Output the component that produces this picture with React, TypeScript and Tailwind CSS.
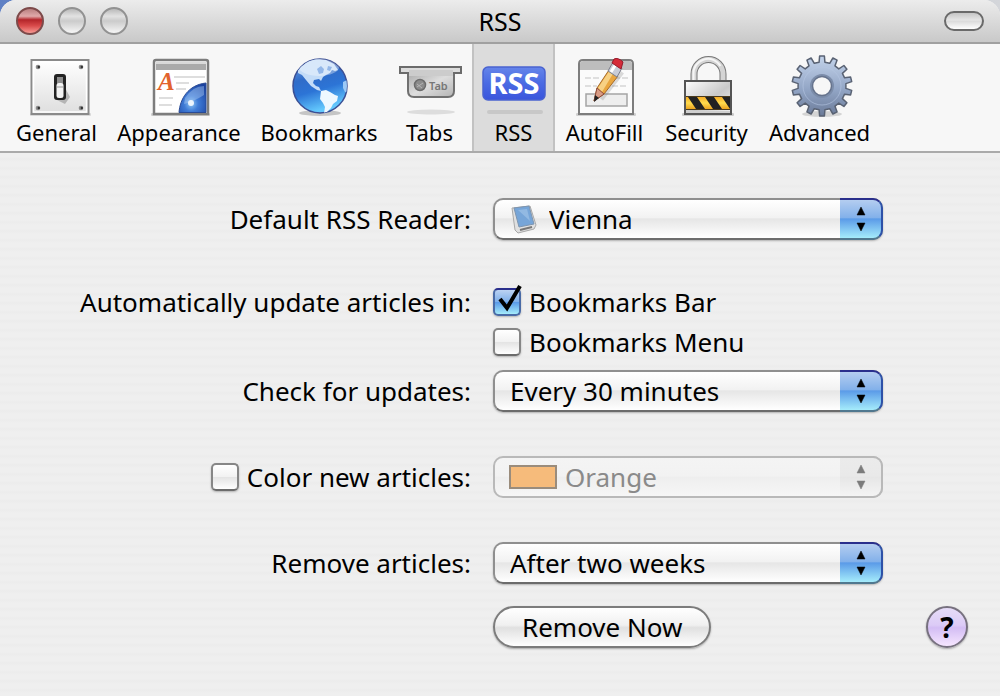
import { useState } from 'react';
import type { ReactNode } from 'react';
import clsx from 'clsx';

function GeneralIcon() {
  return (
    <svg viewBox="0 0 72 64" className="h-16 w-[72px]" aria-hidden="true">
      <defs>
        <linearGradient id="plate" x1="0" y1="0" x2="0" y2="1">
          <stop offset="0" stopColor="#ffffff" />
          <stop offset="1" stopColor="#dedede" />
        </linearGradient>
      </defs>
      <rect x="9" y="59" width="61" height="3" rx="1" fill="#000" opacity="0.12" />
      <rect x="10.500" y="6" width="57" height="54" fill="url(#plate)" stroke="#8a8a8a" strokeWidth="2" />
      <rect x="12.500" y="8" width="53" height="50" fill="none" stroke="#fff" strokeWidth="1.500" />
      {[[17, 13], [60, 13], [17, 54], [60, 54]].map(([x, y]) => (
        <g key={`${x}-${y}`}>
          <circle cx={x} cy={y} r="2.300" fill="#8c8c8c" />
          <circle cx={x + 0.8} cy={y} r="1.200" fill="#333" />
        </g>
      ))}
      <path d="M43 32L49 43L44 50L36 46Z" fill="#777" opacity="0.45" />
      <rect x="33" y="20" width="12" height="26" rx="3" fill="#222" />
      <rect x="36" y="23" width="6" height="7" fill="#8d8d8d" />
      <rect x="35.500" y="29" width="7" height="15" rx="2.500" fill="#f2f2f2" />
      <path d="M35.500 33h7" stroke="#999" strokeWidth="1" />
    </svg>
  );
}

function AppearanceIcon() {
  return (
    <svg viewBox="0 0 72 64" className="h-16 w-[72px]" aria-hidden="true">
      <defs>
        <radialGradient id="appearanceOrb" cx="0.450" cy="0.700" r="0.750">
          <stop offset="0" stopColor="#8cc4f4" />
          <stop offset="0.350" stopColor="#3f7bd6" />
          <stop offset="1" stopColor="#1a429f" />
        </radialGradient>
      </defs>
      <rect x="8" y="59" width="59" height="3" rx="1" fill="#000" opacity="0.16" />
      <path d="M11 60V8q0-2 2-2h50q2 0 2 2v52z" fill="#fff" stroke="#7d7d7d" strokeWidth="2.500" />
      <rect x="13" y="8" width="50" height="8" fill="#aaaaaa" />
      <rect x="13" y="8" width="50" height="2" fill="#d9d9d9" />
      <path d="M31 23h31M33 29h13M33 35h10M16 44h14M16 51h13" stroke="#d4d4d4" strokeWidth="1.500" />
      <path d="M63 29C45 31 37 45 36 58.500H63Z" fill="url(#appearanceOrb)" stroke="#2a4a94" strokeWidth="1" />
      <path d="M42 44q8-12 19-12v9q-11 7-20 9z" fill="#b7d5f7" opacity="0.4" />
      <circle cx="48" cy="49" r="3" fill="#fff" opacity="0.85" />
      <text x="15" y="36" fontSize="25" fontStyle="italic" fontWeight="700" fill="#e2632d" fontFamily="Liberation Serif, serif">A</text>
    </svg>
  );
}

function BookmarksIcon() {
  return (
    <svg viewBox="0 0 72 64" className="h-16 w-[72px]" aria-hidden="true">
      <defs>
        <linearGradient id="ocean" x1="0" y1="0" x2="0.300" y2="1">
          <stop offset="0" stopColor="#7fa9e6" />
          <stop offset="0.400" stopColor="#2f6cc9" />
          <stop offset="0.650" stopColor="#2c74d6" />
          <stop offset="1" stopColor="#63c8fd" />
        </linearGradient>
        <clipPath id="globeClip"><circle cx="37" cy="32" r="27" /></clipPath>
      </defs>
      <ellipse cx="37" cy="59" rx="21" ry="3" fill="#000" opacity="0.2" />
      <circle cx="37" cy="32" r="27" fill="url(#ocean)" stroke="#3b4f94" strokeWidth="1.500" />
      <g clipPath="url(#globeClip)">
        <path d="M15 16C20 9 26 6 33 5l10 1 8 4 4 6-3 1-3-1-2 3-4 2-3 2-2 4-2-2-5 1-1 3 3 3 3 1 2 4-4-1-6-4-5-6-4-5-4-2z" fill="#c3dcf8" />
        <path d="M38 37l5-1 4 2 5 3 3 1-1 5-4 3-2 4-4 4-3 1 1-6-2-4-3-4z" fill="#eef8ff" />
        <path d="M60 28l6-3v15l-4-2-2-4z" fill="#9cc9f6" />
        <path d="M34 15l4-3 3 3-1 4-4 1zM45 12l4 1-2 4-3-1z" fill="#5a91dc" />
        <ellipse cx="36" cy="13" rx="20" ry="9" fill="#fff" opacity="0.35" />
      </g>
    </svg>
  );
}

function TabsIcon() {
  return (
    <svg viewBox="0 0 72 64" className="h-16 w-[72px]" aria-hidden="true">
      <defs>
        <linearGradient id="tabMetal" x1="0" y1="0" x2="1" y2="1">
          <stop offset="0" stopColor="#a9a9a9" />
          <stop offset="0.500" stopColor="#dddddd" />
          <stop offset="1" stopColor="#b4b4b4" />
        </linearGradient>
      </defs>
      <ellipse cx="37" cy="58" rx="24" ry="2.500" fill="#000" opacity="0.1" />
      <path d="M14 18h46v19q0 6-6 6H20q-6 0-6-6z" fill="url(#tabMetal)" stroke="#707070" strokeWidth="2" />
      <rect x="6" y="13" width="61" height="6" fill="#dcdcdc" stroke="#6b6b6b" strokeWidth="2" />
      <rect x="15" y="16" width="44" height="6" fill="#cccccc" />
      <circle cx="26" cy="31" r="5.500" fill="#8b8b8b" stroke="#6c6c6c" strokeWidth="1.500" />
      <path d="M23 33l6-4M23 30l5 4" stroke="#b4b4b4" strokeWidth="1" />
      <text x="35" y="36" fontSize="11" fontWeight="600" fill="#777" fontFamily="Noto Sans, sans-serif">Tab</text>
    </svg>
  );
}

function RssIcon() {
  return (
    <svg viewBox="0 0 72 64" className="h-16 w-[72px]" aria-hidden="true">
      <defs>
        <linearGradient id="rssBlue" x1="0" y1="0" x2="0" y2="1">
          <stop offset="0" stopColor="#6585ea" />
          <stop offset="0.500" stopColor="#4a6ae3" />
          <stop offset="1" stopColor="#3a55dc" />
        </linearGradient>
      </defs>
      <rect x="9" y="56" width="56" height="4" rx="2" fill="#000" opacity="0.09" />
      <rect x="5" y="13" width="62" height="33" rx="5" fill="url(#rssBlue)" stroke="#4a63d0" strokeWidth="1.500" />
      <text x="36" y="40" fontSize="29" fontWeight="700" fill="#fff" textAnchor="middle" fontFamily="Noto Sans, sans-serif">RSS</text>
    </svg>
  );
}

function AutoFillIcon() {
  return (
    <svg viewBox="0 0 72 64" className="h-16 w-[72px]" aria-hidden="true">
      <rect x="7" y="59" width="60" height="3" rx="1" fill="#000" opacity="0.16" />
      <path d="M10 60V10q0-4 4-4h46q4 0 4 4v50z" fill="#fbfbfb" stroke="#7d7d7d" strokeWidth="2" />
      <path d="M11 16v-6q0-3 3-3h46q3 0 3 3v6z" fill="#bdbdbd" />
      <path d="M16 24h15M16 32h12M45 24h14M43 32h15" stroke="#d6d6d6" strokeWidth="1.500" strokeDasharray="6 2" />
      <rect x="17" y="40" width="41" height="12" fill="#eeeeee" stroke="#a5a5a5" strokeWidth="1.500" />
      <path d="M32 45L53 18" stroke="#777" strokeWidth="5" opacity="0.25" />
      <path d="M25 47l3-13 12-18 9 6-14 18z" fill="#e9a63f" stroke="#a56a2a" strokeWidth="1" />
      <path d="M29 34l12-18 4 2-12 20z" fill="#f7d184" />
      <path d="M25 47l3-13 7 6z" fill="#d99b84" stroke="#8e4b3c" strokeWidth="1" />
      <path d="M25 48l1-7 4 3z" fill="#222" />
      <path d="M39 17l5-9 9 6-5 9z" fill="#c9cdd8" stroke="#7d7f8c" strokeWidth="1" />
      <path d="M42 18l5-8" stroke="#fff" strokeWidth="3" />
      <path d="M43 9l2-4q4-2 9 3l-2 7z" fill="#d52b39" stroke="#951a2a" strokeWidth="1" />
    </svg>
  );
}

function SecurityIcon() {
  return (
    <svg viewBox="0 0 72 64" className="h-16 w-[72px]" aria-hidden="true">
      <defs>
        <linearGradient id="lockBody" x1="0" y1="0" x2="1" y2="1">
          <stop offset="0" stopColor="#ffffff" />
          <stop offset="0.550" stopColor="#c9c9c9" />
          <stop offset="1" stopColor="#f3f3f3" />
        </linearGradient>
        <linearGradient id="lockYellow" x1="0" y1="0" x2="0" y2="1">
          <stop offset="0" stopColor="#f4a51f" />
          <stop offset="0.500" stopColor="#ffdc4e" />
          <stop offset="1" stopColor="#e89a17" />
        </linearGradient>
        <clipPath id="stripeClip"><rect x="15" y="43" width="44" height="12" /></clipPath>
      </defs>
      <rect x="11" y="59" width="52" height="3" rx="1" fill="#000" opacity="0.18" />
      <path d="M23 27V20a14.500 14.500 0 0 1 29 0V27" fill="none" stroke="#777" strokeWidth="7" />
      <path d="M23 27V20a14.500 14.500 0 0 1 29 0V27" fill="none" stroke="#d4d4d4" strokeWidth="5" />
      <path d="M22.500 27V20a14.500 14.500 0 0 1 27-8" fill="none" stroke="#f5f5f5" strokeWidth="2" />
      <rect x="14" y="27" width="46" height="33" fill="url(#lockBody)" stroke="#555" strokeWidth="2" />
      <rect x="15" y="42" width="44" height="14" fill="url(#lockYellow)" />
      <g clipPath="url(#stripeClip)" fill="#222">
        <path d="M17 43h9l8 12h-9zM34 43h9l8 12h-9zM51 43h9l8 12h-9z" />
      </g>
      <path d="M15 42.500h44M15 55.500h44" stroke="#4a3a1c" strokeWidth="1" />
      <rect x="15" y="57" width="44" height="2" fill="#cfcfcf" />
    </svg>
  );
}

const GEAR_TEETH = 14;

// four points for each tooth: up the flank, across the top, back down
const gearPath = Array.from({ length: GEAR_TEETH }, (_, i) => {
  const step = 360 / GEAR_TEETH;
  const points = [[-7, 24], [-4.5, 30], [4.5, 30], [7, 24]].map(([deg, r]) => {
    const a = ((i * step + deg - 90) * Math.PI) / 180;
    return `${(38 + r * Math.cos(a)).toFixed(1)} ${(32 + r * Math.sin(a)).toFixed(1)}`;
  });
  return points.join('L');
}).join('L');

function AdvancedIcon() {
  return (
    <svg viewBox="0 0 72 64" className="h-16 w-[72px]" aria-hidden="true">
      <defs>
        <linearGradient id="gearSteel" x1="0" y1="0" x2="0" y2="1">
          <stop offset="0" stopColor="#c3d3ea" />
          <stop offset="0.550" stopColor="#93a6c6" />
          <stop offset="1" stopColor="#6b7b99" />
        </linearGradient>
      </defs>
      <ellipse cx="38" cy="60" rx="20" ry="3" fill="#000" opacity="0.14" />
      <path d={`M${gearPath}Z`} fill="url(#gearSteel)" stroke="#596273" strokeWidth="1.500" strokeLinejoin="round" />
      <circle cx="38" cy="32" r="19" fill="none" stroke="#b5c7e2" strokeWidth="1" opacity="0.6" />
      <circle cx="38" cy="32" r="12" fill="#7c8daa" />
      <circle cx="38" cy="32" r="9.500" fill="#f7f7f7" stroke="#66738c" strokeWidth="1.500" />
    </svg>
  );
}

const panes = [
  { id: 'general', label: 'General', width: 'w-[101px]', icon: <GeneralIcon /> },
  { id: 'appearance', label: 'Appearance', width: 'w-36', icon: <AppearanceIcon /> },
  { id: 'bookmarks', label: 'Bookmarks', width: 'w-[136px]', icon: <BookmarksIcon /> },
  { id: 'tabs', label: 'Tabs', width: 'w-[85px]', icon: <TabsIcon /> },
  { id: 'rss', label: 'RSS', width: 'w-[83px]', icon: <RssIcon /> },
  { id: 'autofill', label: 'AutoFill', width: 'w-[99px]', icon: <AutoFillIcon /> },
  { id: 'security', label: 'Security', width: 'w-[105px]', icon: <SecurityIcon /> },
  { id: 'advanced', label: 'Advanced', width: 'w-[121px]', icon: <AdvancedIcon /> },
];

interface PopupProps {
  id: string;
  options: string[];
  disabled?: boolean;
  image?: ReactNode;
  indent?: string;
}

function Popup({ id, options, disabled = false, image, indent = 'pl-[15px]' }: PopupProps) {
  return (
    <div className="relative w-full max-w-[390px]">
      <select
        id={id}
        disabled={disabled}
        className={clsx(
          'block h-[42px] w-full appearance-none rounded-[10px] border-2 pr-12 text-[26px] leading-8 opacity-100',
          indent,
          disabled
            ? 'border-[#b9b9b9] bg-[linear-gradient(#f4f4f4,#f2f2f2_48%,#eeeeee_50%,#f6f6f6)] text-[#8a8a8a]'
            : 'border-[#8f8f8f] border-b-[#6c6c6c] bg-[linear-gradient(#ffffff,#f2f2f2_46%,#e6e6e6_50%,#ffffff)] text-black shadow-[0_1px_2px_rgba(0,0,0,0.25)]',
        )}
      >
        {options.map((option) => (
          <option key={option}>{option}</option>
        ))}
      </select>
      {image && (
        <span className="pointer-events-none absolute inset-y-0 left-4 flex items-center">{image}</span>
      )}
      <span
        className={clsx(
          'pointer-events-none absolute inset-y-0 right-0 flex w-[43px] items-center justify-center rounded-r-[10px] border-y-2 border-r-2',
          disabled
            ? 'border-[#b9b9b9] bg-[linear-gradient(#ebebeb,#e9e9e9_48%,#e6e6e6_50%,#f4f4f4)] text-[#7c7c7c]'
            : 'border-t-[#2a2f8c] border-r-[#2d51a8] border-b-[#50788f] bg-[linear-gradient(#b4cdf0,#83b1ea_46%,#5b9be8_50%,#a5ecfb)] text-black',
        )}
      >
        <svg viewBox="0 0 10 26" className="h-[26px] w-[10px]" fill="currentColor" aria-hidden="true">
          <path d="M5 1l4 8H1zM5 25l4-8H1z" stroke="currentColor" strokeWidth="0.500" />
        </svg>
      </span>
    </div>
  );
}

interface TickProps {
  label: string;
  checked: boolean;
  onChange: (checked: boolean) => void;
}

function Tick({ label, checked, onChange }: TickProps) {
  return (
    <label className="flex items-center gap-2">
      <span className="relative flex">
        <input
          type="checkbox"
          checked={checked}
          onChange={(e) => onChange(e.target.checked)}
          className="size-7 appearance-none rounded-[5px] border-2 border-[#868686] border-b-[#6c6c6c] bg-[linear-gradient(#ffffff,#f2f2f2_48%,#e4e4e4_52%,#ffffff)] shadow-[0_1px_2px_rgba(0,0,0,0.25)] checked:border-[#4a6ba6] checked:border-t-[#2a2f8c] checked:bg-[linear-gradient(#bcd3f3,#7fb0ea_48%,#5b9be8_52%,#a5ecfb)]"
        />
        {checked && (
          <svg viewBox="0 0 30 32" className="pointer-events-none absolute bottom-0 left-0 h-8 w-[30px]" aria-hidden="true">
            <path d="M7 15l7 9L27 2" fill="none" stroke="#000" strokeWidth="4" />
          </svg>
        )}
      </span>
      {label}
    </label>
  );
}

function ViennaIcon() {
  return (
    <svg viewBox="0 0 32 30" className="h-[30px] w-8" aria-hidden="true">
      <path d="M3 4l18-2 6 19-2 4-16 4-3-3z" fill="#e0e0e0" stroke="#a9a9a9" strokeWidth="1" />
      <path d="M5 4l15-2 5 18-15 3z" fill="#76a5d8" stroke="#7d95b0" strokeWidth="1" />
      <path d="M9 6l9-1 3 12z" fill="#a5c7ea" opacity="0.6" />
      <path d="M11 26l12-3" stroke="#777" strokeWidth="2" />
    </svg>
  );
}

export default function App() {
  const [pane, setPane] = useState('rss');
  const [inBar, setInBar] = useState(true);
  const [inMenu, setInMenu] = useState(false);
  const [colorNew, setColorNew] = useState(false);

  return (
    <div className="min-h-screen bg-linear-to-r from-[#5f80c4] to-[#d4d6da] font-['Noto_Sans',sans-serif] text-black">
      <div className="flex min-h-screen flex-col overflow-hidden rounded-t-[16px] bg-[#eeeeee]">
        {/* Title bar */}
        <header className="grid h-11 grid-cols-[1fr_auto_1fr] items-center border-b-2 border-[#a0a0a0] bg-linear-to-b from-[#ececec] to-[#c9c9c9] px-4">
          <div className="flex gap-[14px]">
            <button
              type="button"
              aria-label="Close"
              className="size-7 rounded-full border-2 border-[#7d4a4a] bg-[linear-gradient(#b98080,#e0a9a9_30%,#b3252a_45%,#d94b4b_70%,#f79a94)]"
            />
            <button
              type="button"
              aria-label="Minimize"
              className="size-7 rounded-full border-2 border-[#929292] bg-[linear-gradient(#b9b9b9,#e2e2e2_30%,#cbcbcb_50%,#f6f6f6)]"
            />
            <button
              type="button"
              aria-label="Zoom"
              className="size-7 rounded-full border-2 border-[#929292] bg-[linear-gradient(#b9b9b9,#e2e2e2_30%,#cbcbcb_50%,#f6f6f6)]"
            />
          </div>
          <h1 className="text-[25px] leading-8">RSS</h1>
          <button
            type="button"
            aria-label="Toggle toolbar"
            className="h-5 w-10 justify-self-end rounded-full border-2 border-[#6a6a6a] bg-[linear-gradient(#c6c6c6,#e6e6e6_45%,#dadada_50%,#ffffff)]"
          />
        </header>

        {/* Toolbar */}
        <nav className="flex border-b-2 border-[#aaaaaa] bg-[#f7f7f7] px-[6px]">
          {panes.map(({ id, label, width, icon }) => (
            <button
              key={id}
              type="button"
              onClick={() => setPane(id)}
              className={clsx(
                'flex shrink-0 flex-col items-center border-x-2 pt-[10px] pb-[5px] text-[22px] leading-7',
                width,
                pane === id ? 'border-[#c2c2c2] bg-[#dcdcdc]' : 'border-transparent',
              )}
            >
              {icon}
              {label}
            </button>
          ))}
        </nav>

        {/* RSS pane */}
        <main className="flex-1 bg-[repeating-linear-gradient(#efefef_0px,#efefef_4px,#ececec_6px,#efefef_9px)] pt-[45px] pr-8 pb-10 text-[26px] leading-8">
          <div className="grid grid-cols-[471fr_475fr] items-center gap-x-[22px]">
            <label htmlFor="reader" className="text-right">Default RSS Reader:</label>
            <Popup id="reader" options={['Vienna', 'Safari', 'Mail']} image={<ViennaIcon />} indent="pl-[54px]" />

            <span className="mt-[46px] text-right">Automatically update articles in:</span>
            <div className="mt-[46px]">
              <Tick label="Bookmarks Bar" checked={inBar} onChange={setInBar} />
            </div>
            <div className="col-start-2 mt-2">
              <Tick label="Bookmarks Menu" checked={inMenu} onChange={setInMenu} />
            </div>

            <label htmlFor="updates" className="mt-3 text-right">Check for updates:</label>
            <div className="mt-3">
              <Popup id="updates" options={['Every 30 minutes', 'Every hour', 'Every day', 'Never']} />
            </div>

            <div className="mt-11 flex justify-end">
              <Tick label="Color new articles:" checked={colorNew} onChange={setColorNew} />
            </div>
            <div className="mt-11">
              <Popup
                id="color"
                disabled={!colorNew}
                options={['Orange', 'Blue', 'Green']}
                indent="pl-[70px]"
                image={<span className="h-6 w-12 border-2 border-[#9a8c7c] bg-[#f6bb7b]" />}
              />
            </div>

            <label htmlFor="remove" className="mt-11 text-right">Remove articles:</label>
            <div className="mt-11">
              <Popup id="remove" options={['After two weeks', 'After one month', 'After one day']} />
            </div>

            <div className="col-start-2 mt-[22px] flex items-center justify-between">
              <button
                type="button"
                className="h-[42px] rounded-full border-2 border-[#7c7c7c] bg-[linear-gradient(#ffffff,#f0f0f0_45%,#e0e0e0_52%,#ffffff)] px-[27px] shadow-[0_1px_2px_rgba(0,0,0,0.3)]"
              >
                Remove Now
              </button>
              <button
                type="button"
                aria-label="Help"
                className="size-[42px] rounded-full border-2 border-[#77717f] bg-[linear-gradient(#e6dcf8,#dccbf6_45%,#d3bdf4_52%,#f6e6ff)] text-[28px] leading-8 font-bold shadow-[0_1px_2px_rgba(0,0,0,0.3)]"
              >
                ?
              </button>
            </div>
          </div>
        </main>
      </div>
    </div>
  );
}
